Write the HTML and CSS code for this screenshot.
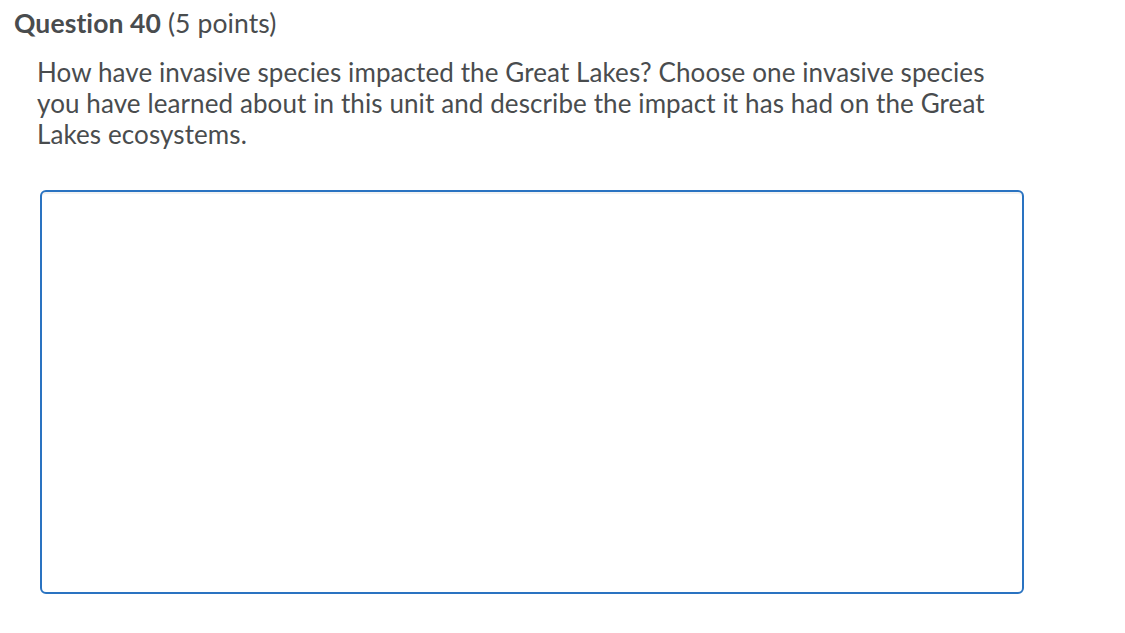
FILE: index.html
```html
<!DOCTYPE html>
<html>
<head>
<meta charset="utf-8">
<link rel="stylesheet" href="styles.css">
</head>
<body>
<div class="question">
  <h2 class="q-title"><strong>Question 40</strong> <span class="pts">(5 points)</span></h2>
  <div class="q-body">
    <p class="q-text">How have invasive species impacted the Great Lakes? Choose one invasive species you have learned about in this unit and describe the impact it has had on the Great Lakes ecosystems.</p>
    <textarea class="answer"></textarea>
  </div>
</div>
</body>
</html>
```
FILE: styles.css
```css
html, body {
  margin: 0;
  padding: 0;
  background: #ffffff;
}
body {
  font-family: Lato, "Noto Sans", sans-serif;
  color: #494c4e;
  font-variant-ligatures: none;
}
.question {
  padding: 7px 0 0 14px;
}
.q-title {
  margin: 0;
  font-size: 26.5px;
  font-weight: 400;
  line-height: 32px;
  letter-spacing: 0.1px;
}
.q-title strong {
  font-weight: 700;
}
.q-body {
  padding: 18px 0 0 23px;
}
.q-text {
  margin: 0;
  width: 987px;
  font-size: 26px;
  line-height: 31px;
  letter-spacing: 0.1px;
  font-weight: 400;
}
.answer {
  display: block;
  box-sizing: border-box;
  margin: 40px 0 0 3px;
  width: 984px;
  height: 404px;
  border: 2px solid #2a73c1;
  border-radius: 6px;
  box-shadow: inset 0 2px 0 0 #f2f2f2;
  resize: none;
  outline: none;
  background: #fff;
}
```
